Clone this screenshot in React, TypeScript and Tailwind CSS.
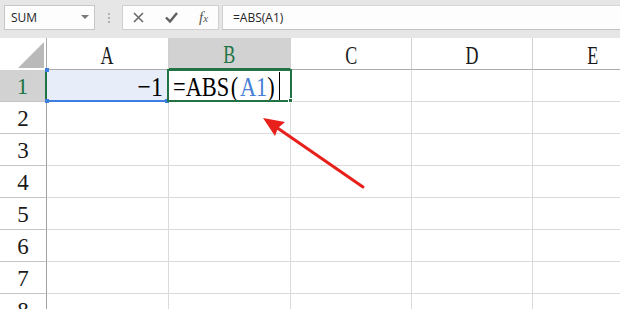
import React from "react";

const cols = [
  { name: "A", w: "w-[122px]" },
  { name: "B", w: "w-[122px]" },
  { name: "C", w: "w-[121px]" },
  { name: "D", w: "w-[121px]" },
  { name: "E", w: "w-[121px]" },
];

const rows = [1, 2, 3, 4, 5, 6, 7, 8];

function FormulaBar() {
  return (
    <div className="flex h-[31px] shrink-0 items-start pt-[5px] font-['Open_Sans',sans-serif] text-[12px] text-[#262626]">
      {/* Name box */}
      <div className="ml-[4px] flex h-[25px] w-[91px] items-center justify-between border border-[#c6c6c6] bg-[#fdfdfd] pl-[6px] pr-[5px]">
        <span>SUM</span>
        <svg width="8" height="5" viewBox="0 0 8 5">
          <path d="M0 0 L8 0 L4 4 Z" fill="#7a7a7a" />
        </svg>
      </div>

      {/* grip */}
      <div className="ml-[13px] flex h-[25px] flex-col items-center justify-center gap-[2px]">
        <span className="h-[2px] w-[2px] bg-[#b0b0b0]" />
        <span className="h-[2px] w-[2px] bg-[#b0b0b0]" />
        <span className="h-[2px] w-[2px] bg-[#b0b0b0]" />
      </div>

      {/* cancel / enter / fx */}
      <div className="ml-[12px] flex h-[25px] w-[97px] items-center border border-[#d0d0d0] bg-[#fdfdfd]">
        <svg className="ml-[10px]" width="11" height="11" viewBox="0 0 11 11">
          <path d="M1 1 L10 10 M10 1 L1 10" stroke="#6a6a6a" strokeWidth="1.6" />
        </svg>
        <svg className="ml-[21px]" width="13" height="11" viewBox="0 0 13 11">
          <path d="M1 5.5 L5 9.5 L12 1" stroke="#5f5f5f" strokeWidth="2.4" fill="none" />
        </svg>
        <span className="ml-[21px] font-['Liberation_Serif',serif] text-[15px] italic leading-none text-[#555]">
          f<span className="text-[11px]">x</span>
        </span>
      </div>

      {/* formula input */}
      <div className="ml-[3px] flex h-[25px] flex-1 items-center border-y border-l border-t-[#d6d6d6] border-b-[#c2c2c2] border-l-[#d0d0d0] bg-[#fdfdfd] pl-[10px]">
        =ABS(A1)
      </div>
    </div>
  );
}

function HeaderRow() {
  return (
    <div className="flex h-[32px] shrink-0">
      <div className="relative w-[47px] shrink-0 border-r border-[#a8a8a8]">
        <svg className="absolute left-[18px] top-[4px]" width="26" height="26" viewBox="0 0 26 26">
          <path d="M26 0 L26 26 L0 26 Z" fill="#b9b9b9" />
        </svg>
      </div>
      {cols.map((c) => {
        const sel = c.name === "B";
        return (
          <div
            key={c.name}
            className={
              c.w +
              " flex shrink-0 items-end justify-center border-r border-[#d0d0d0] " +
              (sel ? "border-b-2 border-b-[#217346] bg-[#d2d2d2] text-[#217346]" : "border-b border-b-[#ababab] text-[#1a1a1a]")
            }
          >
            <span className="inline-block scale-x-[0.72] pb-[1px] font-['Liberation_Serif',serif] text-[25px] leading-none">
              {c.name}
            </span>
          </div>
        );
      })}
    </div>
  );
}

function Row({ n }: { n: number }) {
  const sel = n === 1;
  return (
    <div className="flex h-[32px] shrink-0">
      <div
        className={
          "flex w-[47px] shrink-0 items-end justify-center border-b border-b-[#c4c4c4] font-['Liberation_Serif',serif] text-[23px] leading-none " +
          (sel ? "border-r-2 border-r-[#217346] bg-[#d2d2d2] text-[#217346]" : "border-r border-r-[#a0a0a0] text-[#1a1a1a]")
        }
      >
        <span className="pb-[3px]">{n}</span>
      </div>
      {cols.map((c) => (
        <div
          key={c.name}
          className={
            c.w +
            " flex shrink-0 items-end border-b border-r border-[#dadada] font-['Liberation_Serif',serif] text-[28px] leading-none text-black " +
            (sel && c.name === "A" ? "justify-end bg-[#e8eef9] pr-[5px]" : "")
          }
        >
          {sel && c.name === "A" && (
            <span className="inline-block origin-right scale-x-[0.85]">−1</span>
          )}
          {sel && c.name === "B" && (
            <span className="inline-block origin-left translate-x-[4px] scale-x-[0.8] whitespace-nowrap">
              =ABS<span className="px-[2px]">(</span><span className="text-[#4a7fd4]">A1</span>)
            </span>
          )}
        </div>
      ))}
    </div>
  );
}

export default function App() {
  return (
    <div className="relative flex h-[309px] w-[620px] flex-col overflow-hidden bg-[#e6e6e6]">
      <FormulaBar />

      <div className="relative mt-[7px] flex flex-col bg-white">
        <HeaderRow />
        {rows.map((n) => (
          <Row key={n} n={n} />
        ))}

        {/* A1 reference highlight */}
        <div className="absolute left-[47px] top-[62px] h-[2px] w-[121px] bg-[#3d7fe0]" />
        <div className="absolute left-[45px] top-[30px] h-[4px] w-[4px] bg-[#3d7fe0]" />
        <div className="absolute left-[45px] top-[61px] h-[4px] w-[4px] bg-[#3d7fe0]" />
        <div className="absolute left-[165px] top-[61px] h-[4px] w-[4px] bg-[#3d7fe0]" />

        {/* B1 active cell */}
        <div className="absolute left-[167px] top-[31px] h-[33px] w-[125px] border-2 border-[#217346]" />
        <div className="absolute left-[288px] top-[60px] h-[5px] w-[5px] border border-white bg-[#217346]" />
        {/* text cursor */}
        <div className="absolute left-[279px] top-[34px] h-[28px] w-px bg-black" />
      </div>

      {/* red arrow */}
      <svg className="pointer-events-none absolute left-0 top-0" width="620" height="309" viewBox="0 0 620 309">
        <line x1="363" y1="187" x2="276" y2="127" stroke="#e8201c" strokeWidth="3" strokeLinecap="round" />
        <path d="M263 118 L285 122 L278 128 L275 136 Z" fill="#e8201c" />
      </svg>
    </div>
  );
}
